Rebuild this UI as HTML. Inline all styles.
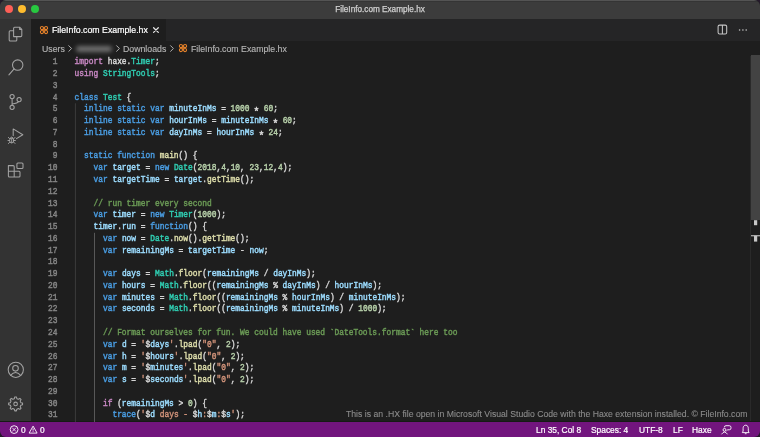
<!DOCTYPE html>
<html><head><meta charset="utf-8"><style>
*{margin:0;padding:0;box-sizing:border-box}
html,body{width:760px;height:437px;overflow:hidden;background:#241a2a}
body{position:relative;font-family:"Liberation Sans",sans-serif}
#win{position:absolute;left:0;top:0;width:760px;height:437px;border-radius:6px;overflow:hidden;background:#1e1e1e}
#title{position:absolute;left:0;top:0;width:760px;height:18.5px;background:linear-gradient(#545454 0,#545454 1px,#353535 1px,#353535 2px,#3c3c3c 2px)}
#title .tt{position:absolute;left:0;width:760px;top:4.6px;text-align:center;color:#d0d0d0;-webkit-text-stroke:0.25px #d0d0d0;font-size:8.2px;line-height:10px}
.dot{position:absolute;top:4.7px;width:8.4px;height:8.4px;border-radius:50%}
#act{position:absolute;left:0;top:18.5px;width:31px;height:403.5px;background:#333333}
#tabs{position:absolute;left:31px;top:18.5px;width:729px;height:22.5px;background:#252526}
#tab{position:absolute;left:0;top:0;width:135px;height:22.5px;background:#1e1e1e}
#tab .tt{position:absolute;left:21px;top:6px;color:#ffffff;-webkit-text-stroke:0.2px #fff;font-size:8.75px;line-height:11px;white-space:pre}
#crumbs{position:absolute;left:30px;top:40px;width:730px;height:16px;color:#b4b4b4;font-size:8.75px;line-height:11px;white-space:pre}
#crumbs span{position:absolute;top:3.6px;-webkit-text-stroke:0.15px #b4b4b4}
.ln,.nm{position:absolute;height:12px;font-family:"Liberation Mono",monospace;font-size:7.88px;line-height:12px;white-space:pre;color:#d4d4d4;-webkit-text-stroke:0.4px currentColor;transform:scaleY(1.2);transform-origin:0 8.1px}
.ln{left:74.6px}
.nm{left:20px;width:37.5px;text-align:right;color:#858585}
i{font-style:normal}
#wm,#crumbs span,#tab .tt,#title .tt,#status span{will-change:transform}
#crumbs span,#tab .tt{transform:scaleY(1.06);transform-origin:0 8.5px}
.k{color:#4a9de2} .p{color:#c586c0} .t{color:#30cdb2} .v{color:#9cdcfe} .f{color:#dcdcaa} .n{color:#b5cea8} .s{color:#ce9178} .c{color:#6a9955} .r{color:#4a9de2} .ast{display:inline-block;transform:translateY(2.5px) scale(1.25)}
#status{position:absolute;left:0;top:422px;width:760px;height:15px;background:#72157e;color:#ffffff;font-size:8.4px;line-height:15px;white-space:pre}
#status span{position:absolute;top:0.6px;-webkit-text-stroke:0.2px #fff}
#sline{position:absolute;left:0;top:421px;width:760px;height:1px;background:#161a16}
#wm{position:absolute;left:346px;top:407.5px;color:#8c8c8c;font-size:8.68px;line-height:12px;white-space:pre;-webkit-text-stroke:0.1px #8c8c8c}
#blur{position:absolute;left:76px;top:45.5px;width:36px;height:6.5px;background:#6e6e6e;border-radius:3px;filter:blur(2px)}
#scroll{position:absolute;left:750px;top:56px;width:10px;height:366px;border-left:1px solid #2a2a2a}
#slider{position:absolute;left:751px;top:55px;width:9px;height:165px;background:#434343}
</style></head><body>
<div id="win">
<div id="title">
  <div class="dot" style="left:4.7px;background:#fe5f57"></div>
  <div class="dot" style="left:17.8px;background:#febc2e"></div>
  <div class="dot" style="left:30.9px;background:#28c840"></div>
  <div class="tt">FileInfo.com Example.hx</div>
</div>
<div id="act"></div>
<div id="tabs">
  <div id="tab">
    <div style="position:absolute;left:8.35px;top:6.1px"><svg width="10" height="10" viewBox="0 0 10 10" style="display:block"><g fill="none" stroke="#e8832a" stroke-width="1.05"><circle cx="2.95" cy="2.95" r="1.55"/><circle cx="7.05" cy="2.95" r="1.55"/><circle cx="2.95" cy="7.05" r="1.55"/><circle cx="7.05" cy="7.05" r="1.55"/></g><path d="M5,3 L5.6,4.4 L7,5 L5.6,5.6 L5,7 L4.4,5.6 L3,5 L4.4,4.4 Z" fill="#e8832a"/></svg></div>
    <div class="tt">FileInfo.com Example.hx</div>
    
  </div>
</div>
<div id="crumbs">
  <span style="left:12px">Users</span>
  <span style="left:93px">Downloads</span>
  <span style="left:161px">FileInfo.com Example.hx</span>
  <div style="position:absolute;left:148.2px;top:3.3px"><svg width="10" height="10" viewBox="0 0 10 10" style="display:block"><g fill="none" stroke="#e8832a" stroke-width="1.05"><circle cx="2.95" cy="2.95" r="1.55"/><circle cx="7.05" cy="2.95" r="1.55"/><circle cx="2.95" cy="7.05" r="1.55"/><circle cx="7.05" cy="7.05" r="1.55"/></g><path d="M5,3 L5.6,4.4 L7,5 L5.6,5.6 L5,7 L4.4,5.6 L3,5 L4.4,4.4 Z" fill="#e8832a"/></svg></div>
</div>
<div id="blur"></div>
<div id="scroll"></div>
<div id="slider"></div>
<div class=nm style="top:56.20px">1</div>
<div class=nm style="top:67.98px">2</div>
<div class=nm style="top:79.75px">3</div>
<div class=nm style="top:91.53px">4</div>
<div class=nm style="top:103.30px">5</div>
<div class=nm style="top:115.08px">6</div>
<div class=nm style="top:126.85px">7</div>
<div class=nm style="top:138.62px">8</div>
<div class=nm style="top:150.40px">9</div>
<div class=nm style="top:162.18px">10</div>
<div class=nm style="top:173.95px">11</div>
<div class=nm style="top:185.73px">12</div>
<div class=nm style="top:197.50px">13</div>
<div class=nm style="top:209.28px">14</div>
<div class=nm style="top:221.05px">15</div>
<div class=nm style="top:232.82px">16</div>
<div class=nm style="top:244.60px">17</div>
<div class=nm style="top:256.38px">18</div>
<div class=nm style="top:268.15px">19</div>
<div class=nm style="top:279.93px">20</div>
<div class=nm style="top:291.70px">21</div>
<div class=nm style="top:303.48px">22</div>
<div class=nm style="top:315.25px">23</div>
<div class=nm style="top:327.02px">24</div>
<div class=nm style="top:338.80px">25</div>
<div class=nm style="top:350.57px">26</div>
<div class=nm style="top:362.35px">27</div>
<div class=nm style="top:374.12px">28</div>
<div class=nm style="top:385.90px">29</div>
<div class=nm style="top:397.68px">30</div>
<div class=nm style="top:409.45px">31</div>
<div class=nm style="top:421.23px">32</div>

<div class=ln style="top:56.20px"><i class=p>import</i> haxe.<i class=t>Timer</i>;</div>
<div class=ln style="top:67.98px"><i class=p>using</i> <i class=t>StringTools</i>;</div>
<div class=ln style="top:79.75px"></div>
<div class=ln style="top:91.53px"><i class=k>class</i> <i class=t>Test</i> {</div>
<div class=ln style="top:103.30px">  <i class=k>inline</i> <i class=k>static</i> <i class=k>var</i> <i class=v>minuteInMs</i> = <i class=n>1000</i> <i class=ast>*</i> <i class=n>60</i>;</div>
<div class=ln style="top:115.08px">  <i class=k>inline</i> <i class=k>static</i> <i class=k>var</i> <i class=v>hourInMs</i> = <i class=v>minuteInMs</i> <i class=ast>*</i> <i class=n>60</i>;</div>
<div class=ln style="top:126.85px">  <i class=k>inline</i> <i class=k>static</i> <i class=k>var</i> <i class=v>dayInMs</i> = <i class=v>hourInMs</i> <i class=ast>*</i> <i class=n>24</i>;</div>
<div class=ln style="top:138.62px"></div>
<div class=ln style="top:150.40px">  <i class=k>static</i> <i class=k>function</i> <i class=f>main</i>() {</div>
<div class=ln style="top:162.18px">    <i class=k>var</i> <i class=v>target</i> = <i class=k>new</i> <i class=t>Date</i>(<i class=n>2018</i>,<i class=n>4</i>,<i class=n>10</i>, <i class=n>23</i>,<i class=n>12</i>,<i class=n>4</i>);</div>
<div class=ln style="top:173.95px">    <i class=k>var</i> <i class=v>targetTime</i> = <i class=v>target</i>.<i class=f>getTime</i>();</div>
<div class=ln style="top:185.73px"></div>
<div class=ln style="top:197.50px">    <i class=c>// run timer every second</i></div>
<div class=ln style="top:209.28px">    <i class=k>var</i> <i class=v>timer</i> = <i class=k>new</i> <i class=t>Timer</i>(<i class=n>1000</i>);</div>
<div class=ln style="top:221.05px">    <i class=v>timer</i>.<i class=v>run</i> = <i class=k>function</i>() {</div>
<div class=ln style="top:232.82px">      <i class=k>var</i> <i class=v>now</i> = <i class=t>Date</i>.<i class=f>now</i>().<i class=f>getTime</i>();</div>
<div class=ln style="top:244.60px">      <i class=k>var</i> <i class=v>remainingMs</i> = <i class=v>targetTime</i> - <i class=v>now</i>;</div>
<div class=ln style="top:256.38px"></div>
<div class=ln style="top:268.15px">      <i class=k>var</i> <i class=v>days</i> = <i class=t>Math</i>.<i class=f>floor</i>(<i class=v>remainingMs</i> / <i class=v>dayInMs</i>);</div>
<div class=ln style="top:279.93px">      <i class=k>var</i> <i class=v>hours</i> = <i class=t>Math</i>.<i class=f>floor</i>((<i class=v>remainingMs</i> % <i class=v>dayInMs</i>) / <i class=v>hourInMs</i>);</div>
<div class=ln style="top:291.70px">      <i class=k>var</i> <i class=v>minutes</i> = <i class=t>Math</i>.<i class=f>floor</i>((<i class=v>remainingMs</i> % <i class=v>hourInMs</i>) / <i class=v>minuteInMs</i>);</div>
<div class=ln style="top:303.48px">      <i class=k>var</i> <i class=v>seconds</i> = <i class=t>Math</i>.<i class=f>floor</i>((<i class=v>remainingMs</i> % <i class=v>minuteInMs</i>) / <i class=n>1000</i>);</div>
<div class=ln style="top:315.25px"></div>
<div class=ln style="top:327.02px">      <i class=c>// Format ourselves for fun. We could have used `DateTools.format` here too</i></div>
<div class=ln style="top:338.80px">      <i class=k>var</i> <i class=v>d</i> = <i class=s>&#x27;</i>$<i class=v>days</i><i class=s>&#x27;</i>.<i class=f>lpad</i>(<i class=s>&quot;0&quot;</i>, <i class=n>2</i>);</div>
<div class=ln style="top:350.57px">      <i class=k>var</i> <i class=v>h</i> = <i class=s>&#x27;</i>$<i class=v>hours</i><i class=s>&#x27;</i>.<i class=f>lpad</i>(<i class=s>&quot;0&quot;</i>, <i class=n>2</i>);</div>
<div class=ln style="top:362.35px">      <i class=k>var</i> <i class=v>m</i> = <i class=s>&#x27;</i>$<i class=v>minutes</i><i class=s>&#x27;</i>.<i class=f>lpad</i>(<i class=s>&quot;0&quot;</i>, <i class=n>2</i>);</div>
<div class=ln style="top:374.12px">      <i class=k>var</i> <i class=v>s</i> = <i class=s>&#x27;</i>$<i class=v>seconds</i><i class=s>&#x27;</i>.<i class=f>lpad</i>(<i class=s>&quot;0&quot;</i>, <i class=n>2</i>);</div>
<div class=ln style="top:385.90px"></div>
<div class=ln style="top:397.68px">      <i class=p>if</i> (<i class=v>remainingMs</i> &gt; <i class=n>0</i>) {</div>
<div class=ln style="top:409.45px">        <i class=r>trace</i>(<i class=s>&#x27;</i>$<i class=v>d</i><i class=s> days - </i>$<i class=v>h</i><i class=s>:</i>$<i class=v>m</i><i class=s>:</i>$<i class=v>s</i><i class=s>&#x27;</i>);</div>
<div class=ln style="top:421.23px">      }</div>

<div id="wm">This is an .HX file open in Microsoft Visual Studio Code with the Haxe extension installed. © FileInfo.com</div>
<div id="sline"></div>
<div id="status">
  <span style="left:21px">0</span>
  <span style="left:40px">0</span>
  <span style="left:536px">Ln 35, Col 8</span>
  <span style="left:591px">Spaces: 4</span>
  <span style="left:639px">UTF-8</span>
  <span style="left:673px">LF</span>
  <span style="left:692px">Haxe</span>
</div>
<svg width="760" height="437" style="position:absolute;left:0;top:0" viewBox="0 0 760 437">
<g fill="none" stroke="#a3a3a3" stroke-width="1.05" stroke-linejoin="round" stroke-linecap="round">
 <path d="M13.6,36.6 V28.2 Q13.6,27.2 14.6,27.2 H19.6 L21.8,29.4 V35.6 Q21.8,36.6 20.8,36.6 Z M19.6,27.2 V29.4 H21.8"/>
 <path d="M13.6,30.7 H10.2 Q9.2,30.7 9.2,31.7 V40 Q9.2,41 10.2,41 H15.8 Q16.8,41 16.8,40 V36.6"/>
 <circle cx="17.7" cy="65.1" r="5.2"/>
 <path d="M14.1,68.8 L8.9,74.9"/>
 <circle cx="12.1" cy="96.6" r="2.1"/><circle cx="19.1" cy="99.6" r="2.1"/><circle cx="12.1" cy="107.3" r="2.1"/>
 <path d="M12.1,98.7 V105.2 M18.6,101.6 Q17.6,103.6 12.3,103.9"/>
 <path d="M13.2,135.6 V128.9 L22.8,134.7 L16.5,138.6"/>
 <path d="M8.4,165.6 H13.2 Q14.2,165.6 14.2,166.6 V171.2 H19 Q20,171.2 20,172.2 V176 Q20,177 19,177 H9.4 Q8.4,177 8.4,176 Z M8.4,171.2 H14.2 V177"/>
 <rect x="16.9" y="162.9" width="6.1" height="5.7" rx="1"/>
 <circle cx="15.8" cy="369.8" r="7.6"/>
 <circle cx="15.5" cy="368.3" r="2.8"/>
 <path d="M10.5,375.4 Q15.5,369.8 20.7,375.4"/>
 <path d="M14.34,398.65 L14.78,396.95 L16.42,396.95 L16.86,398.65 L18.42,399.30 L19.93,398.40 L21.10,399.57 L20.20,401.08 L20.85,402.64 L22.55,403.08 L22.55,404.72 L20.85,405.16 L20.20,406.72 L21.10,408.23 L19.93,409.40 L18.42,408.50 L16.86,409.15 L16.42,410.85 L14.78,410.85 L14.34,409.15 L12.78,408.50 L11.27,409.40 L10.10,408.23 L11.00,406.72 L10.35,405.16 L8.65,404.72 L8.65,403.08 L10.35,402.64 L11.00,401.08 L10.10,399.57 L11.27,398.40 L12.78,399.30Z"/>
 <circle cx="15.6" cy="403.9" r="1.8"/>
</g>
<g fill="none" stroke="#a3a3a3" stroke-width="0.95" stroke-linecap="round">
 <ellipse cx="11.7" cy="140.5" rx="2.1" ry="2.5"/>
 <path d="M10.3,137.9 Q11.7,135.9 13.1,137.9"/>
 <path d="M9.6,138.7 L8.4,137.4 M9.6,140.5 L8,140.5 M9.7,142.2 L8.4,143.5 M13.8,138.7 L15,137.4 M13.8,140.5 L15.4,140.5 M13.7,142.2 L15,143.5 M11.7,138.6 V142.6"/>
</g>
<g fill="none" stroke="#c5c5c5" stroke-width="1.05">
 <rect x="718.1" y="25.1" width="8.6" height="8.9" rx="1.5"/>
 <path d="M722.4,25.1 V34"/>
</g>
<path d="M153.6,27.7 L158.3,32.4 M158.3,27.7 L153.6,32.4" stroke="#e6e6e6" stroke-width="1.25" stroke-linecap="round"/>
<g fill="#c8c8c8"><rect x="754" y="220.2" width="3.2" height="5"/><rect x="751" y="235.2" width="9" height="1.1"/><rect x="754" y="235.8" width="3.2" height="5.8"/></g>
<g fill="#c5c5c5"><circle cx="739.6" cy="30" r="0.8"/><circle cx="742.9" cy="30" r="0.8"/><circle cx="746.2" cy="30" r="0.8"/></g>
<g fill="none" stroke="#b0b0b0" stroke-width="1" stroke-linecap="round" stroke-linejoin="round">
 <path d="M68.8,45.7 L71.6,48.5 L68.8,51.3"/>
 <path d="M116.6,45.7 L119.4,48.5 L116.6,51.3"/>
 <path d="M170.6,45.7 L173.4,48.5 L170.6,51.3"/>
</g>
<rect x="74.9" y="103.3" width="1" height="318.7" fill="#3b3b3b"/>
<rect x="94" y="232.8" width="1" height="189.2" fill="#585858"/>
<g fill="none" stroke="#ffffff" stroke-width="0.9">
 <circle cx="14.1" cy="429.6" r="3.9"/>
 <path d="M12.2,427.7 L16,431.5 M16,427.7 L12.2,431.5" stroke-width="0.8"/>
 <path d="M33.1,426.1 L37.1,433.1 H29.1 Z" stroke-linejoin="round"/>
 <path d="M33.1,428.4 V430.6 M33.1,431.3 V432"/>
</g>
<g fill="none" stroke="#ffffff" stroke-width="0.9" stroke-linejoin="round">
 <path d="M745.7,425.2 C743.7,425.2 743.1,427 743.1,428.6 V431.1 L742.3,432.6 H749.1 L748.3,431.1 V428.6 C748.3,427 747.7,425.2 745.7,425.2 Z M744.8,433.7 H746.6"/>
 <path d="M724.3,427.4 Q724.3,425.7 726,425.7 H729.3 Q731,425.7 731,427.4 V428.1 Q731,429.8 729.3,429.8 H727.7 L726.5,430.9"/>
 <circle cx="724.5" cy="429.9" r="1.45" fill="#72157e"/>
 <path d="M721.5,434.3 Q724.5,429.8 727.5,434.3"/>
</g>
</svg>
</div>
</body></html>
